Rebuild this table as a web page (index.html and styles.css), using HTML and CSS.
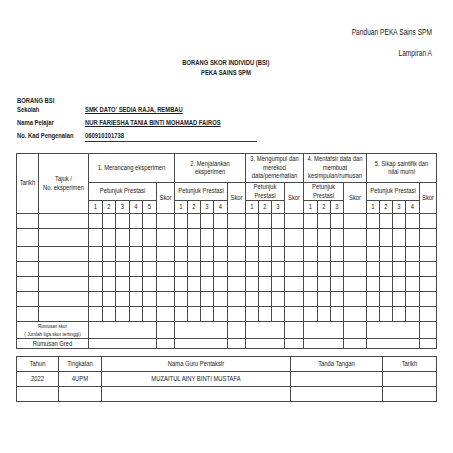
FILE: index.html
```html
<!DOCTYPE html>
<html lang="ms">
<head>
<meta charset="utf-8">
<title>Borang Skor Individu (BSI)</title>
<link rel="stylesheet" href="styles.css">
</head>
<body>
<div class="page">
  <div class="meta-right">
    <p><span class="nx">Panduan PEKA Sains SPM</span></p>
    <p class="appendix"><span class="nx">Lampiran A</span></p>
  </div>
  <div class="title">
    <p><span class="nx">BORANG SKOR INDIVIDU (BSI)</span></p>
    <p><span class="nx">PEKA SAINS SPM</span></p>
  </div>
  <div class="info">
    <p class="info-head"><span class="nx">BORANG BSI</span></p>
    <div class="info-row first">
      <span class="label"><span class="nx">Sekolah</span></span>
      <span class="value"><span class="nx underline">SMK DATO' SEDIA RAJA, REMBAU</span></span>
    </div>
    <div class="info-row">
      <span class="label"><span class="nx">Nama Pelajar</span></span>
      <span class="value"><span class="nx underline">NUR FARIESHA TANIA BINTI MOHAMAD FAIROS</span></span>
    </div>
    <div class="info-row">
      <span class="label"><span class="nx">No. Kad Pengenalan</span></span>
      <span class="value ruled"><span class="nx">060910101738</span></span>
    </div>
  </div>

  <table class="score">
    <colgroup>
      <col style="width:22px"><col style="width:50px">
      <col style="width:14px"><col style="width:13px"><col style="width:14px"><col style="width:13px"><col style="width:14px"><col style="width:18px">
      <col style="width:13px"><col style="width:13px"><col style="width:13px"><col style="width:14px"><col style="width:18px">
      <col style="width:13px"><col style="width:13px"><col style="width:13px"><col style="width:19px">
      <col style="width:14px"><col style="width:13px"><col style="width:13px"><col style="width:23px">
      <col style="width:13px"><col style="width:13px"><col style="width:13px"><col style="width:14px"><col style="width:17px">
    </colgroup>
    <thead>
      <tr class="h1">
        <th rowspan="3"><span>Tarikh</span></th>
        <th rowspan="3"><span>Tajuk /<br>No. eksperimen</span></th>
        <th colspan="6"><span>1. Merancang eksperimen</span></th>
        <th colspan="5"><span>2. Menjalankan<br>eksperimen</span></th>
        <th colspan="4"><span>3. Mengumpul dan<br>merekod<br>data/pemerhatian</span></th>
        <th colspan="4"><span>4. Mentafsir data dan<br>membuat<br>kesimpulan/rumusan</span></th>
        <th colspan="5"><span>5. Sikap saintifik dan<br>nilai murni</span></th>
      </tr>
      <tr class="h2">
        <th colspan="5"><span>Petunjuk Prestasi</span></th>
        <th rowspan="2"><span>Skor</span></th>
        <th colspan="4"><span>Petunjuk Prestasi</span></th>
        <th rowspan="2"><span>Skor</span></th>
        <th colspan="3"><span>Petunjuk<br>Prestasi</span></th>
        <th rowspan="2"><span>Skor</span></th>
        <th colspan="3"><span>Petunjuk<br>Prestasi</span></th>
        <th rowspan="2"><span>Skor</span></th>
        <th colspan="4"><span>Petunjuk Prestasi</span></th>
        <th rowspan="2"><span>Skor</span></th>
      </tr>
      <tr class="h3">
        <th><span>1</span></th><th><span>2</span></th><th><span>3</span></th><th><span>4</span></th><th><span>5</span></th>
        <th><span>1</span></th><th><span>2</span></th><th><span>3</span></th><th><span>4</span></th>
        <th><span>1</span></th><th><span>2</span></th><th><span>3</span></th>
        <th><span>1</span></th><th><span>2</span></th><th><span>3</span></th>
        <th><span>1</span></th><th><span>2</span></th><th><span>3</span></th><th><span>4</span></th>
      </tr>
    </thead>
    <tbody>
      <tr class="d"><td></td><td></td><td></td><td></td><td></td><td></td><td></td><td></td><td></td><td></td><td></td><td></td><td></td><td></td><td></td><td></td><td></td><td></td><td></td><td></td><td></td><td></td><td></td><td></td><td></td><td></td></tr>
      <tr class="d tall"><td></td><td></td><td></td><td></td><td></td><td></td><td></td><td></td><td></td><td></td><td></td><td></td><td></td><td></td><td></td><td></td><td></td><td></td><td></td><td></td><td></td><td></td><td></td><td></td><td></td><td></td></tr>
      <tr class="d"><td></td><td></td><td></td><td></td><td></td><td></td><td></td><td></td><td></td><td></td><td></td><td></td><td></td><td></td><td></td><td></td><td></td><td></td><td></td><td></td><td></td><td></td><td></td><td></td><td></td><td></td></tr>
      <tr class="d"><td></td><td></td><td></td><td></td><td></td><td></td><td></td><td></td><td></td><td></td><td></td><td></td><td></td><td></td><td></td><td></td><td></td><td></td><td></td><td></td><td></td><td></td><td></td><td></td><td></td><td></td></tr>
      <tr class="d"><td></td><td></td><td></td><td></td><td></td><td></td><td></td><td></td><td></td><td></td><td></td><td></td><td></td><td></td><td></td><td></td><td></td><td></td><td></td><td></td><td></td><td></td><td></td><td></td><td></td><td></td></tr>
      <tr class="d"><td></td><td></td><td></td><td></td><td></td><td></td><td></td><td></td><td></td><td></td><td></td><td></td><td></td><td></td><td></td><td></td><td></td><td></td><td></td><td></td><td></td><td></td><td></td><td></td><td></td><td></td></tr>
      <tr class="d"><td></td><td></td><td></td><td></td><td></td><td></td><td></td><td></td><td></td><td></td><td></td><td></td><td></td><td></td><td></td><td></td><td></td><td></td><td></td><td></td><td></td><td></td><td></td><td></td><td></td><td></td></tr>
      <tr class="r1">
        <td colspan="2"><span class="formula"><span class="f1">Rumusan skor</span><br><span class="f2">( Jumlah tiga skor tertinggi)</span></span></td>
        <td colspan="5"></td><td></td>
        <td colspan="4"></td><td></td>
        <td colspan="3"></td><td></td>
        <td colspan="3"></td><td></td>
        <td colspan="4"></td><td></td>
      </tr>
      <tr class="r2">
        <td colspan="2"><span class="grade">Rumusan Gred</span></td>
        <td colspan="5"></td><td></td>
        <td colspan="4"></td><td></td>
        <td colspan="3"></td><td></td>
        <td colspan="3"></td><td></td>
        <td colspan="4"></td><td></td>
      </tr>
    </tbody>
  </table>

  <table class="teacher">
    <colgroup>
      <col style="width:42px"><col style="width:43px"><col style="width:189px"><col style="width:92px"><col style="width:54px">
    </colgroup>
    <tr><td><span>Tahun</span></td><td><span>Tingkatan</span></td><td><span>Nama Guru Pentaksir</span></td><td><span>Tanda Tangan</span></td><td><span>Tarikh</span></td></tr>
    <tr><td><span>2022</span></td><td><span>4UPM</span></td><td><span>MUZAITUL AINY BINTI MUSTAFA</span></td><td></td><td></td></tr>
    <tr><td></td><td></td><td></td><td></td><td></td></tr>
  </table>
</div>
</body>
</html>
```

FILE: styles.css
```css
html, body {
  margin: 0;
  padding: 0;
  background: #ffffff;
}

body {
  font-family: "Liberation Sans", Arial, sans-serif;
  color: #1c1c1c;
  width: 453px;
}

p {
  margin: 0;
}

/* condensed text (narrow face look) */
.nx {
  display: inline-block;
  white-space: nowrap;
  transform: scaleX(0.78);
}

.page {
  padding: 27px 17px 0 16px;
}

.meta-right {
  text-align: right;
  padding-right: 4px;
  font-size: 8.5px;
  line-height: 10px;
}

.meta-right .nx {
  transform-origin: right center;
}

.meta-right .appendix {
  margin-top: 11px;
}

.title {
  text-align: center;
  font-weight: bold;
  font-size: 7.5px;
  line-height: 10px;
}

.title .nx {
  transform-origin: center center;
}

.info {
  margin-top: 19px;
  font-size: 7.5px;
  font-weight: bold;
}

.info .nx {
  transform-origin: left center;
}

.info-head {
  line-height: 8px;
  padding-left: 1px;
}

.info-row {
  display: flex;
  line-height: 8px;
  margin-top: 5px;
}

.info-row.first {
  margin-top: 1px;
}

.label {
  width: 68px;
  flex: none;
  padding-left: 1px;
}

.underline {
  text-decoration: underline;
}

.value.ruled {
  width: 172px;
  border-bottom: 1px solid #333;
  padding-bottom: 1px;
}

table {
  border-collapse: collapse;
  table-layout: fixed;
  width: 420px;
}

.score {
  margin-top: 11px;
}

.score th,
.score td,
.teacher td {
  border: 1px solid #4a4a4a;
  padding: 0;
  text-align: center;
  vertical-align: middle;
  font-weight: normal;
  font-size: 7.5px;
  line-height: 8.5px;
  overflow: hidden;
}

.score th > span,
.score td > span,
.teacher td > span {
  display: block;
  margin: 0 -50px;
  white-space: nowrap;
  transform: scaleX(0.78);
}

.score .h1 { height: 29px; }
.score .h2 { height: 18px; }
.score .h3 { height: 13px; }
.score .d { height: 15px; }
.score .d.tall { height: 18px; }
.score .r1 { height: 16px; }
.score .r2 { height: 10px; }

.formula {
  line-height: 7px;
}

.formula .f1 {
  font-size: 5.8px;
}

.formula .f2 {
  font-size: 6px;
}

.score td > .grade {
  font-size: 7.5px;
  line-height: 8px;
}

.teacher {
  margin-top: 7px;
}

.teacher tr {
  height: 15px;
}
```
